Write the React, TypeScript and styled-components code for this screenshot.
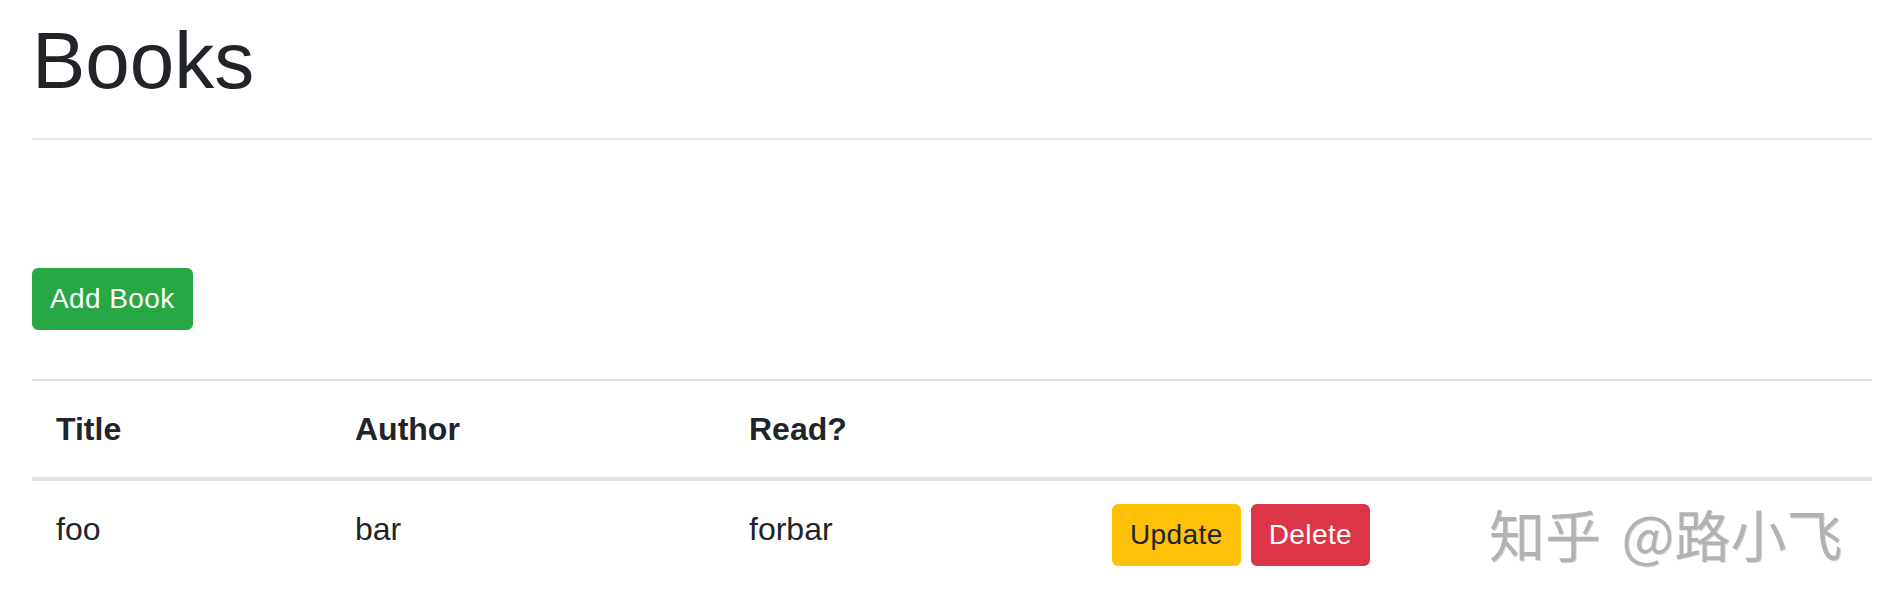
import styled, { createGlobalStyle } from 'styled-components';

const GlobalStyle = createGlobalStyle`
  html, body {
    margin: 0;
    padding: 0;
    background: #ffffff;
  }
  body {
    font-family: "Liberation Sans", Arial, sans-serif;
    color: #212529;
  }
`;

const books = [{ title: 'foo', author: 'bar', read: 'forbar' }];

const Page = styled.div`
  position: relative;
  width: 1840px;
  padding: 13px 16px 0 32px;
`;

const Heading = styled.h1`
  margin: 0;
  font-size: 80px;
  line-height: 96px;
  font-weight: 400;
  color: #212529;
`;

const Rule = styled.hr`
  margin: 29px 0 0;
  border: 0;
  height: 2px;
  background: #e6e6e6;
`;

const Btn = styled.button<{ $variant: 'success' | 'warning' | 'danger' }>`
  font-family: "Liberation Sans", Arial, sans-serif;
  font-size: 28px;
  line-height: 42px;
  letter-spacing: 0.4px;
  padding: 8px 16px;
  border: 2px solid transparent;
  border-radius: 6px;
  cursor: pointer;
  color: ${({ $variant }) => ($variant === 'warning' ? '#212529' : '#ffffff')};
  background: ${({ $variant }) =>
    $variant === 'success' ? '#28a745' : $variant === 'warning' ? '#ffc107' : '#dc3545'};
  border-color: ${({ $variant }) =>
    $variant === 'success' ? '#28a745' : $variant === 'warning' ? '#ffc107' : '#dc3545'};
`;

const Toolbar = styled.div`
  margin-top: 128px;
`;

const Table = styled.table`
  margin-top: 49px;
  width: 100%;
  border-collapse: collapse;
  table-layout: fixed;
  font-size: 32px;
  line-height: 48px;
`;

const Th = styled.th`
  text-align: left;
  font-weight: 700;
  padding: 24px;
  border-top: 2px solid #dee2e6;
  border-bottom: 4px solid #dee2e6;
`;

const Td = styled.td`
  padding: 24px;
  vertical-align: top;
`;

const Actions = styled.div`
  display: flex;
  gap: 10px;
  margin-top: -1px;
`;

const Watermark = styled.div`
  position: absolute;
  left: 1489px;
  top: 505px;
  font-family: "Noto Sans CJK SC", sans-serif;
  font-size: 56px;
  line-height: 56px;
  word-spacing: 8px;
  color: #b2b2b2;
  text-shadow: 1px 1px 0 #dadada;
  white-space: nowrap;
  pointer-events: none;
`;

export default function App() {
  return (
    <>
      <GlobalStyle />
      <Page>
        <Heading>Books</Heading>
        <Rule />
        <Toolbar>
          <Btn $variant="success">Add Book</Btn>
        </Toolbar>
        <Table>
          <colgroup>
            <col style={{ width: 299 }} />
            <col style={{ width: 394 }} />
            <col style={{ width: 363 }} />
            <col />
          </colgroup>
          <thead>
            <tr>
              <Th>Title</Th>
              <Th>Author</Th>
              <Th>Read?</Th>
              <Th />
            </tr>
          </thead>
          <tbody>
            {books.map((b) => (
              <tr key={b.title}>
                <Td>{b.title}</Td>
                <Td>{b.author}</Td>
                <Td>{b.read}</Td>
                <Td>
                  <Actions>
                    <Btn $variant="warning">Update</Btn>
                    <Btn $variant="danger">Delete</Btn>
                  </Actions>
                </Td>
              </tr>
            ))}
          </tbody>
        </Table>
        <Watermark>知乎 @路小飞</Watermark>
      </Page>
    </>
  );
}
